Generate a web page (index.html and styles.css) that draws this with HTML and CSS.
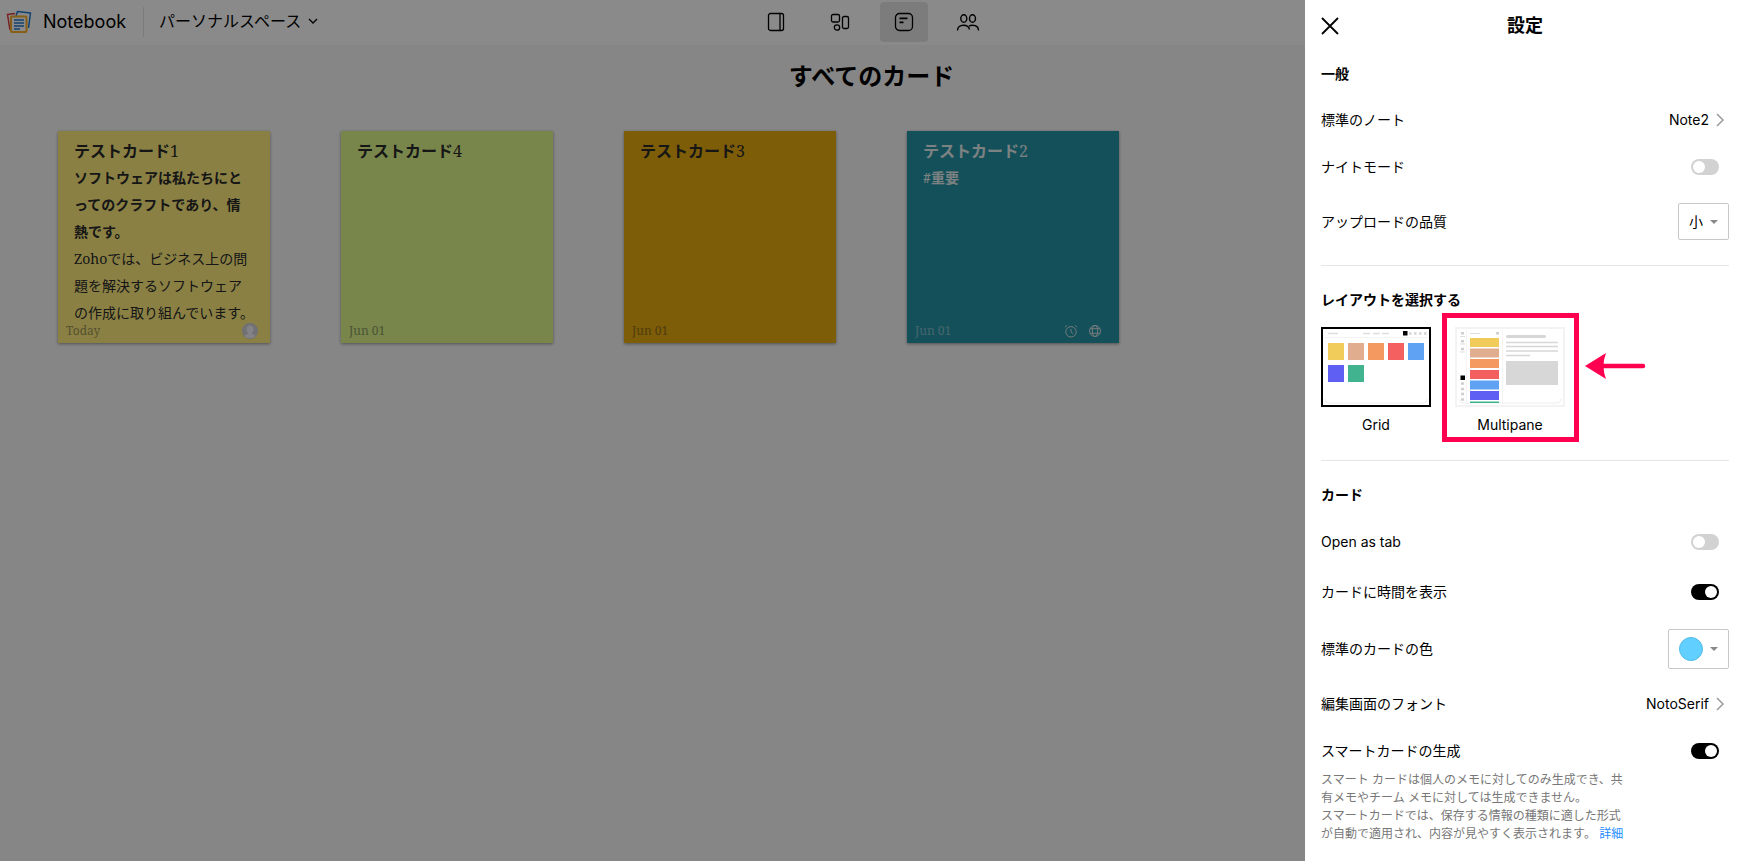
FILE: index.html
```html
<!DOCTYPE html>
<html lang="ja">
<head>
    <meta charset="UTF-8">
    <meta name="viewport" content="width=device-width, initial-scale=1.0">
    <title>Notebook</title>
    <link rel="stylesheet" href="styles.css">
</head>
<body>
    <div class="app">
        <header class="topbar">
            <div class="brand">
                <svg class="logo" width="26" height="24" viewBox="0 0 26 24" fill="none">
                    <path d="M10 6 L11.500 1.500 L24.500 3 L22.500 18" stroke="#1f78d1" stroke-width="1.500" stroke-linejoin="round"/>
                    <path d="M9 3.500 L1.500 4.500 L4 20" stroke="#e0393e" stroke-width="1.500" stroke-linejoin="round"/>
                    <rect x="5" y="6.500" width="15.500" height="15.500" rx="1" fill="#fff" stroke="#f5b027" stroke-width="2"/>
                    <path d="M8 10h10M8 13h10M8 16h10M8 19h6" stroke="#1f78d1" stroke-width="1.500"/>
                </svg>
                <span class="brand-name">Notebook</span>
            </div>
            <button class="space-btn" type="button">
                パーソナルスペース
                <svg width="10" height="10" viewBox="0 0 10 10" fill="none" stroke="#000" stroke-width="1.300"><path d="M1 3l4 4 4-4"/></svg>
            </button>
            <nav class="views">
                <button class="view-btn" type="button" aria-label="ノート">
                    <svg width="20" height="20" viewBox="0 0 20 20" fill="none" stroke="#000" stroke-width="1.300"><rect x="2.500" y="1.500" width="15" height="17" rx="2"/><path d="M14 1.500v17"/></svg>
                </button>
                <button class="view-btn" type="button" aria-label="グループ">
                    <svg width="20" height="20" viewBox="0 0 20 20" fill="none" stroke="#000" stroke-width="1.300"><rect x="1.500" y="2.500" width="8" height="7.500" rx="1.500"/><rect x="12.500" y="4.500" width="6" height="12" rx="1.500"/><circle cx="7" cy="15.500" r="2.700"/></svg>
                </button>
                <button class="view-btn active" type="button" aria-label="カード">
                    <svg width="20" height="20" viewBox="0 0 20 20" fill="none" stroke="#000" stroke-width="1.300"><rect x="1.500" y="1.500" width="17" height="17" rx="4"/><path d="M5.500 6.300h8M5.500 10.300h4" stroke-width="1.800"/></svg>
                </button>
                <button class="view-btn" type="button" aria-label="共有">
                    <svg width="24" height="20" viewBox="0 0 24 20" fill="none" stroke="#000" stroke-width="1.400"><ellipse cx="7.800" cy="6.500" rx="3" ry="3.800"/><ellipse cx="16.500" cy="6.500" rx="3" ry="3.800"/><path d="M1.500 18.500c0-3.500 2.500-5.300 6-5.300s5.500 1.800 6 4.300M13 14.200c1-.7 2.200-1 3.500-1 3.500 0 6 1.800 6 5.300"/></svg>
                </button>
            </nav>
        </header>

        <main>
            <h1 class="page-title">すべてのカード</h1>
            <div class="cards">
                <article class="card card-yellow">
                    <h2 class="card-title">テストカード<span>1</span></h2>
                    <div class="card-body">
                        <b>ソフトウェアは私たちにと<br>ってのクラフトであり、情<br>熱です。</b><br>
                        Zohoでは、ビジネス上の問<br>題を解決するソフトウェア<br>の作成に取り組んでいます。
                    </div>
                    <div class="card-foot">
                        <time>Today</time>
                        <svg class="avatar" width="16" height="16" viewBox="0 0 16 16"><circle cx="8" cy="8" r="8" fill="#cfcfd8"/><path d="M8 2.500c2.200 0 3.600 1.500 3.600 3.800 0 1.800-.8 3-1.800 3.700 0 1.200 2.700 1.500 3.800 3a8 8 0 0 1-11.200 0c1.100-1.500 3.800-1.800 3.800-3-1-.7-1.800-1.900-1.800-3.700C4.400 4 5.800 2.500 8 2.500z" fill="#f3f3f8"/></svg>
                    </div>
                </article>
                <article class="card card-green">
                    <h2 class="card-title">テストカード<span>4</span></h2>
                    <div class="card-foot"><time>Jun 01</time></div>
                </article>
                <article class="card card-orange">
                    <h2 class="card-title">テストカード<span>3</span></h2>
                    <div class="card-foot"><time>Jun 01</time></div>
                </article>
                <article class="card card-teal">
                    <h2 class="card-title">テストカード<span>2</span></h2>
                    <div class="card-body"><b>#重要</b></div>
                    <div class="card-foot">
                        <time>Jun 01</time>
                        <span class="card-icons">
                            <svg width="14" height="14" viewBox="0 0 14 14" fill="none" stroke="#d5e3e6"><circle cx="7" cy="7.800" r="5.200"/><path d="M7 5v2.800l1.700 2M1 3.200l2-2M13 3.200l-2-2"/></svg>
                            <svg width="14" height="14" viewBox="0 0 14 14" fill="none" stroke="#d5e3e6"><circle cx="7" cy="7" r="5.500"/><ellipse cx="7" cy="7" rx="2.700" ry="5.500"/><path d="M2.200 4.700h9.600M2.200 9.300h9.600"/></svg>
                        </span>
                    </div>
                </article>
            </div>
        </main>
    </div>

    <div class="overlay"></div>

    <!-- Settings panel -->
    <aside class="panel">
        <div class="panel-header">
            <button class="close-btn" type="button" aria-label="閉じる">
                <svg width="18" height="18" viewBox="0 0 18 18" fill="none" stroke="#000" stroke-width="1.800"><path d="M1 1l16 16M17 1L1 17"/></svg>
            </button>
            <h2>設定</h2>
        </div>

        <section class="group">
            <h3>一般</h3>
            <div class="row">
                <span>標準のノート</span>
                <button class="link-btn" type="button">Note2
                    <svg width="8" height="14" viewBox="0 0 8 14" fill="none" stroke="#999" stroke-width="1.500"><path d="M1 1l6 6-6 6"/></svg>
                </button>
            </div>
            <div class="row">
                <label for="nightMode">ナイトモード</label>
                <input class="toggle" type="checkbox" id="nightMode">
            </div>
            <div class="row row-tall">
                <label for="quality">アップロードの品質</label>
                <span class="select-wrap">
                    <select id="quality"><option>小</option></select>
                    <i class="caret"></i>
                </span>
            </div>
        </section>

        <section class="group">
            <h3>レイアウトを選択する</h3>
            <div class="layouts">
                <label class="layout">
                    <input type="radio" name="layout" checked>
                    <span class="thumb">
                        <svg width="110" height="80" viewBox="0 0 110 80">
                            <path d="M3 10.500h104" stroke="#f4f4f4"/>
                            <path d="M4 72q0 4 4 4h94q4 0 4-4" fill="none" stroke="#eee"/>
                            <path d="M7 6.500h10M42 6.500h7M52 6.500h7M61 6.500h7" stroke="#ddd" stroke-width="1.500"/>
                            <rect x="82" y="4" width="4.500" height="4.500"/>
                            <path d="M88 6.500h2.500M93 6.500h2.500M98 6.500h2.500M103 6.500h2.500" stroke="#d5d5d5" stroke-width="2.500"/>
                            <rect x="7" y="16" width="16" height="17" fill="#f2cc5b"/>
                            <rect x="27" y="16" width="16" height="17" fill="#e0ad8f"/>
                            <rect x="47" y="16" width="16" height="17" fill="#f4995f"/>
                            <rect x="67" y="16" width="16" height="17" fill="#f45f5f"/>
                            <rect x="87" y="16" width="16" height="17" fill="#5fa2f4"/>
                            <rect x="7" y="38" width="16" height="17" fill="#605ff4"/>
                            <rect x="27" y="38" width="16" height="17" fill="#41b48f"/>
                        </svg>
                    </span>
                    Grid
                </label>
                <label class="layout highlight">
                    <input type="radio" name="layout">
                    <span class="thumb">
                        <svg width="110" height="80" viewBox="0 0 110 80">
                            <path d="M11.500 3v72M47.500 3v72" stroke="#f4f4f4"/>
                            <path d="M4 72q0 4 4 4h94q4 0 4-4" fill="none" stroke="#eee"/>
                            <path d="M6 6.200h3M6 14.200h3M6 22h3M6 56.500h3M6 62h3M6 67h3M6 72.500h3M41 6.200h3" stroke="#d0d0d0" stroke-width="2.500"/>
                            <path d="M5 9.500h5M5 17h5M5 25h5M15 6.500h10" stroke="#ddd"/>
                            <rect x="5.500" y="48.500" width="4.500" height="4.500"/>
                            <rect x="15" y="11" width="29" height="9" fill="#f2cc5b"/>
                            <rect x="15" y="21.500" width="29" height="9" fill="#e0ad8f"/>
                            <rect x="15" y="32" width="29" height="9" fill="#f4995f"/>
                            <rect x="15" y="43" width="29" height="9" fill="#f45f5f"/>
                            <rect x="15" y="53.500" width="29" height="9" fill="#5fa2f4"/>
                            <rect x="15" y="64" width="29" height="9" fill="#605ff4"/>
                            <rect x="15" y="74.500" width="29" height="1.500" fill="#41b48f"/>
                            <path d="M52.500 9.500h37" stroke="#d7d7d7" stroke-width="3" stroke-linecap="round"/>
                            <path d="M51 15.500h52M51 19.500h52M51 24h52M51 28.500h24" stroke="#d7d7d7" stroke-width="1.700"/>
                            <rect x="51" y="34" width="52" height="24" fill="#d7d7d7"/>
                        </svg>
                    </span>
                    Multipane
                    <svg class="arrow" width="62" height="28" viewBox="0 0 62 28"><path d="M18 14h40" stroke="#ff0050" stroke-width="4.500" stroke-linecap="round"/><path d="M0 14L21 1q-5 13 0 26z" fill="#ff0050"/></svg>
                </label>
            </div>
        </section>

        <section class="group">
            <h3>カード</h3>
            <div class="row row-mid">
                <label for="openTab">Open as tab</label>
                <input class="toggle" type="checkbox" id="openTab">
            </div>
            <div class="row row-mid">
                <label for="showTime">カードに時間を表示</label>
                <input class="toggle" type="checkbox" id="showTime" checked>
            </div>
            <div class="row row-tall">
                <span>標準のカードの色</span>
                <button class="color-btn" type="button" aria-label="標準のカードの色" aria-haspopup="listbox">
                    <span class="swatch"></span>
                    <i class="caret"></i>
                </button>
            </div>
            <div class="row">
                <span>編集画面のフォント</span>
                <button class="link-btn" type="button">NotoSerif
                    <svg width="8" height="14" viewBox="0 0 8 14" fill="none" stroke="#999" stroke-width="1.500"><path d="M1 1l6 6-6 6"/></svg>
                </button>
            </div>
            <div class="row">
                <label for="smartCard">スマートカードの生成</label>
                <input class="toggle" type="checkbox" id="smartCard" checked>
            </div>
            <p class="note">スマート カードは個人のメモに対してのみ生成でき、共有メモやチーム メモに対しては生成できません。<br>スマートカードでは、保存する情報の種類に適した形式が自動で適用され、内容が見やすく表示されます。 <a href="#">詳細</a></p>
        </section>
    </aside>
</body>
</html>
```
FILE: styles.css
```css
* {
    box-sizing: border-box;
}
body {
    margin: 0;
    font-family: Inter, "Noto Sans CJK JP", sans-serif;
    font-size: 14px;
    line-height: 20px;
    color: #000;
    background: #f8f8f8;
    overflow: hidden;
}
h1, h2, h3, p {
    margin: 0;
}
button {
    padding: 0;
    border: none;
    background: none;
    font: inherit;
    color: inherit;
    cursor: pointer;
}
svg {
    display: block;
    flex: none;
}

/* Top bar */
.topbar {
    position: relative;
    display: flex;
    align-items: center;
    height: 45px;
    padding-bottom: 2px;
    background: #fff;
}
.brand {
    display: flex;
    align-items: center;
    gap: 11px;
    height: 30px;
    padding: 0 17px 0 6px;
    border-right: 1px solid #e6e6e6;
}
.brand-name {
    font-size: 18px;
}
.space-btn {
    display: flex;
    align-items: center;
    gap: 7px;
    padding: 0 0 2px 15px;
    font-size: 16px;
}
.views {
    position: absolute;
    left: 50%;
    display: flex;
    gap: 16px;
    transform: translateX(-50%);
}
.view-btn {
    display: flex;
    align-items: center;
    justify-content: center;
    width: 48px;
    height: 40px;
    border-radius: 4px;
}
.view-btn.active {
    background: #e6e6e6;
}

/* Cards */
.page-title {
    padding-top: 14px;
    font-size: 24px;
    line-height: 36px;
    text-align: center;
}
.cards {
    display: flex;
    flex-wrap: wrap;
    gap: 71px;
    padding: 36px 58px;
}
.card {
    display: flex;
    flex-direction: column;
    width: 212px;
    height: 212px;
    padding: 8px 8px 4px;
    color: #2a2a2a;
    font-family: "Noto Serif", "DejaVu Serif", "Noto Sans CJK JP", serif;
    white-space: nowrap;
    box-shadow: 0 1px 3px rgba(0,0,0,0.4);
}
.card-yellow {
    background: #ffed7e;
}
.card-green {
    background: #def88d;
}
.card-orange {
    background: #e9ac12;
}
.card-teal {
    background: #2594a7;
    color: #e6eff1;
}
.card-title {
    padding-left: 8px;
    font-size: 16px;
    line-height: 25px;
}
.card-title span {
    font-weight: normal;
}
.card-body {
    flex: 1;
    min-height: 0;
    padding-left: 8px;
    line-height: 27px;
}
.card-foot {
    display: flex;
    flex: none;
    align-items: center;
    justify-content: space-between;
    height: 17px;
    margin-top: auto;
    font-size: 12px;
}
.card-foot time {
    opacity: 0.45;
}
.card-icons {
    display: flex;
    gap: 10px;
    padding-right: 9px;
}
.avatar {
    margin-right: 4px;
}

.overlay {
    position: fixed;
    inset: 0;
    background: rgba(0,0,0,0.46);
}

/* Settings panel */
.panel {
    position: fixed;
    top: 0;
    right: 0;
    bottom: 0;
    width: 438px;
    padding: 0 14px 0 16px;
    background: #fff;
    overflow: hidden;
}
.panel-header {
    display: flex;
    align-items: center;
    height: 51px;
}
.panel-header h2 {
    flex: 1;
    padding-right: 18px;
    font-size: 18px;
    text-align: center;
}
.group + .group {
    margin-top: 12px;
    padding-top: 11px;
    border-top: 1px solid #e6e6e6;
}
.group h3 {
    font-size: 14px;
    line-height: 45px;
}
.row {
    display: flex;
    align-items: center;
    justify-content: space-between;
    height: 47px;
}
.row-mid {
    height: 50px;
}
.row-tall {
    height: 63px;
}
.link-btn {
    display: flex;
    align-items: center;
    gap: 7px;
    padding-right: 5px;
}
.toggle {
    appearance: none;
    display: flex;
    width: 28px;
    height: 16px;
    margin: 0 10px 0 0;
    padding: 2px;
    border-radius: 8px;
    background: #d2d2d2;
}
.toggle::before {
    content: "";
    width: 12px;
    height: 12px;
    border-radius: 50%;
    background: #fff;
}
.toggle:checked {
    justify-content: flex-end;
    background: #000;
}
.select-wrap {
    position: relative;
}
.select-wrap select {
    appearance: none;
    display: block;
    width: 51px;
    height: 37px;
    padding: 0 10px;
    border: 1px solid #c8c8c8;
    border-radius: 2px;
    background: #fff;
    color: #000;
    font: inherit;
}
.caret {
    border: 4px solid transparent;
    border-top-color: #888;
    border-bottom: 0;
}
.select-wrap .caret {
    position: absolute;
    top: 17px;
    right: 11px;
    pointer-events: none;
}
.color-btn {
    display: flex;
    align-items: center;
    justify-content: space-between;
    width: 61px;
    height: 40px;
    padding: 0 10px;
    border: 1px solid #c8c8c8;
    border-radius: 2px;
}
.swatch {
    width: 24px;
    height: 24px;
    border: 1px solid #52bce8;
    border-radius: 50%;
    background: #61cfff;
}

/* Layout picker */
.layouts {
    display: flex;
    gap: 24px;
    padding: 5px 0 13px;
}
.layout {
    position: relative;
    display: flex;
    flex-direction: column;
    align-items: center;
    gap: 8px;
}
.layout input {
    position: absolute;
    opacity: 0;
}
.thumb {
    display: block;
    outline: 2px solid #f3f3f3;
    outline-offset: -2px;
}
.layout input:checked + .thumb {
    outline-color: #000;
}
.highlight::after {
    content: "";
    position: absolute;
    inset: -14px -14px -7px -13px;
    border: 5px solid #ff0050;
}
.arrow {
    position: absolute;
    top: 25px;
    left: 130px;
}

.note {
    width: 306px;
    margin-top: -3px;
    font-size: 12px;
    line-height: 18px;
    color: #777;
}
.note a {
    color: #1a8cff;
    text-decoration: none;
}
```
